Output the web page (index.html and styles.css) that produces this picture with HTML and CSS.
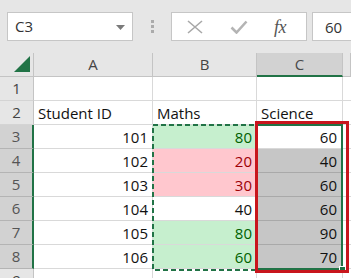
FILE: index.html
```html
<!DOCTYPE html>
<html>
<head>
<meta charset="utf-8">
<link rel="stylesheet" href="styles.css">
</head>
<body>
<div class="app">
  <div class="topbar">
    <div class="namebox">
      <span class="namebox-text">C3</span>
      <svg class="dropdown" width="9" height="5" viewBox="0 0 9 5"><polygon points="0,0 9,0 4.5,5" fill="#7a7a7a"/></svg>
    </div>
    <div class="grip"><span></span><span></span><span></span></div>
    <div class="formula-tools">
      <svg class="ico-x" width="16" height="14" viewBox="0 0 16 14"><path d="M1 1 L15 13 M15 1 L1 13" stroke="#a8a8a8" stroke-width="1.6" fill="none"/></svg>
      <svg class="ico-check" width="18" height="14" viewBox="0 0 18 14"><path d="M1.5 7.5 L6.5 12.5 L16.5 1.5" stroke="#b4b4b4" stroke-width="2.6" fill="none"/></svg>
      <span class="fx">fx</span>
    </div>
    <div class="formula-value">60</div>
  </div>

  <div class="sheet">
    <div class="hdr corner"><svg width="16" height="16" viewBox="0 0 16 16"><polygon points="16,0 16,16 0,16" fill="#217346"/></svg></div>
    <div class="hdr col">A</div>
    <div class="hdr col">B</div>
    <div class="hdr col sel-col">C</div>
    <div class="hdr col"></div>

    <div class="hdr row">1</div>
    <div class="cell"></div><div class="cell"></div><div class="cell"></div><div class="cell"></div>

    <div class="hdr row">2</div>
    <div class="cell left">Student ID</div><div class="cell left">Maths</div><div class="cell left">Science</div><div class="cell"></div>

    <div class="hdr row sel-row">3</div>
    <div class="cell">101</div><div class="cell good">80</div><div class="cell active">60</div><div class="cell"></div>

    <div class="hdr row sel-row">4</div>
    <div class="cell">102</div><div class="cell bad">20</div><div class="cell selected">40</div><div class="cell"></div>

    <div class="hdr row sel-row">5</div>
    <div class="cell">103</div><div class="cell bad">30</div><div class="cell selected">60</div><div class="cell"></div>

    <div class="hdr row sel-row">6</div>
    <div class="cell">104</div><div class="cell">40</div><div class="cell selected">60</div><div class="cell"></div>

    <div class="hdr row sel-row">7</div>
    <div class="cell">105</div><div class="cell good">80</div><div class="cell selected">90</div><div class="cell"></div>

    <div class="hdr row sel-row">8</div>
    <div class="cell">106</div><div class="cell good">60</div><div class="cell selected">70</div><div class="cell"></div>

    <div class="hdr row">9</div>
    <div class="cell"></div><div class="cell"></div><div class="cell"></div><div class="cell"></div>

    <svg class="ants" width="105" height="147" viewBox="0 0 105 147"><rect x="1" y="1" width="103" height="145" fill="none" stroke="#217346" stroke-width="2" stroke-dasharray="5 3"/></svg>
    <div class="selection"></div>
    <div class="handle"></div>
    <div class="annotation"></div>
  </div>
</div>
</body>
</html>
```

FILE: styles.css
```css
* { box-sizing: border-box; }
html, body { margin: 0; padding: 0; }
body {
  width: 351px;
  height: 278px;
  overflow: hidden;
  background: #ffffff;
  font-family: "Open Sans", "Liberation Sans", sans-serif;
  font-size: 15px;
  color: #1a1a1a;
}
.app { width: 351px; height: 278px; overflow: hidden; }

.topbar {
  height: 53px;
  background: #e6e6e6;
  display: flex;
  align-items: flex-start;
  padding: 12px 0 0 7px;
}
.namebox {
  width: 126px;
  height: 29px;
  background: #fff;
  border: 1px solid #c6c6c6;
  display: flex;
  align-items: center;
  justify-content: space-between;
  padding: 0 7px 0 7px;
  color: #333;
}
.namebox-text { line-height: 1; }
.dropdown { margin-top: 1px; }

.grip {
  width: 38px;
  height: 29px;
  display: flex;
  flex-direction: column;
  align-items: center;
  justify-content: center;
  gap: 2px;
}
.grip span { width: 3px; height: 3px; background: #ababab; }

.formula-tools {
  width: 136px;
  height: 29px;
  background: #fff;
  border: 1px solid #c6c6c6;
  display: flex;
  align-items: center;
  padding-left: 15px;
}
.ico-x { margin-right: 27px; }
.ico-check { margin-right: 26px; }
.fx {
  font-family: "Liberation Serif", "DejaVu Serif", serif;
  font-style: italic;
  font-size: 18px;
  color: #555;
  letter-spacing: -0.5px;
  line-height: 1;
}
.formula-value {
  margin-left: 5px;
  flex: 1;
  height: 29px;
  background: #fff;
  border: 1px solid #c6c6c6;
  border-right: none;
  display: flex;
  align-items: center;
  padding-left: 12px;
  color: #333;
}

.sheet {
  position: relative;
  display: grid;
  grid-template-columns: 34px 119px 104px 86px 8px;
  grid-auto-rows: 24px;
}
.hdr {
  background: #e6e6e6;
  color: #444;
  display: flex;
  align-items: flex-end;
  justify-content: center;
  padding-bottom: 2px;
  line-height: 20px;
}
.hdr.col { border-right: 1px solid #c4c4c4; border-bottom: 1px solid #c4c4c4; }
.hdr.sel-col {
  background: #d2d2d2;
  color: #4a4a4a;
  border-bottom: 2px solid #217346;
  padding-bottom: 1px;
}
.hdr.corner {
  border-right: 1px solid #c4c4c4;
  border-bottom: 1px solid #c4c4c4;
  align-items: flex-end;
  justify-content: flex-end;
  padding: 0 3px 4px 0;
}
.hdr.corner svg { display: block; }
.hdr.row { border-right: 1px solid #c4c4c4; border-bottom: 1px solid #d4d4d4; }
.hdr.sel-row {
  background: #d2d2d2;
  color: #555;
  border-right: 2px solid #217346;
  border-bottom: 1px solid #b4b4b4;
}

.cell {
  border-right: 1px solid #d9d9d9;
  border-bottom: 1px solid #d9d9d9;
  display: flex;
  align-items: flex-end;
  justify-content: flex-end;
  padding: 0 4px 1px 4px;
  line-height: 20px;
  color: #111;
  white-space: nowrap;
}
.cell.left { justify-content: flex-start; }
.cell.good { background: #c6efce; color: #006100; }
.cell.bad { background: #ffc7ce; color: #9c0006; }
.cell.active { padding-right: 5px; }
.cell.selected {
  background: #c6c6c6;
  border-bottom-color: #a9a9a9;
  padding-right: 5px;
}

.ants { position: absolute; left: 152px; top: 71px; }
.selection {
  position: absolute;
  left: 256px;
  top: 71px;
  width: 87px;
  height: 146px;
  border: 2px solid #217346;
}
.handle {
  position: absolute;
  left: 339px;
  top: 213px;
  width: 7px;
  height: 7px;
  background: #217346;
  border: 1px solid #fff;
}
.annotation {
  position: absolute;
  left: 255px;
  top: 68px;
  width: 94px;
  height: 152px;
  border: 3px solid #c8161d;
}
```
